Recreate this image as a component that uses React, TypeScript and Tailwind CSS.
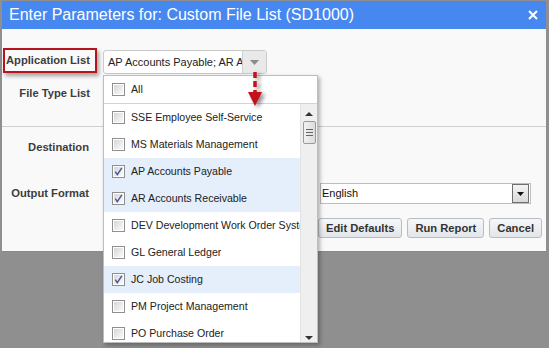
import React from "react";

const FONT = { fontFamily: '"Liberation Sans", Arial, sans-serif' };

interface Item {
  label: string;
  checked?: boolean;
}

const items: Item[] = [
  { label: "SSE Employee Self-Service" },
  { label: "MS Materials Management" },
  { label: "AP Accounts Payable", checked: true },
  { label: "AR Accounts Receivable", checked: true },
  { label: "DEV Development Work Order System" },
  { label: "GL General Ledger" },
  { label: "JC Job Costing", checked: true },
  { label: "PM Project Management" },
  { label: "PO Purchase Order" },
];

function CheckBox({ checked }: { checked?: boolean }) {
  return (
    <svg width="13" height="13" viewBox="0 0 13 13" className="shrink-0">
      <defs>
        <linearGradient id="cbg" x1="0" y1="0" x2="1" y2="1">
          <stop offset="0" stopColor="#d6d6d6" />
          <stop offset="1" stopColor="#fbfbfb" />
        </linearGradient>
      </defs>
      <rect x="0.5" y="0.5" width="12" height="12" fill="#fff" stroke="#8f8f8f" />
      <rect x="2" y="2" width="9" height="9" fill="url(#cbg)" />
      {checked && (
        <path d="M3.3 6.6 L5.3 9.6 L9.8 2.8" fill="none" stroke="#4b5a92" strokeWidth="1.5" />
      )}
    </svg>
  );
}

function Row({ item }: { item: Item }) {
  return (
    <div
      className={`flex items-center h-[27px] shrink-0 pl-[8px] gap-[6px] whitespace-nowrap overflow-hidden ${
        item.checked ? "bg-[#e5eefb]" : ""
      }`}
    >
      <CheckBox checked={item.checked} />
      <span className="text-[10.6px] text-[#222]">{item.label}</span>
    </div>
  );
}

function Scrollbar() {
  return (
    <div className="w-[17px] shrink-0 bg-[#efefef] border-l border-[#e2e2e2] flex flex-col items-center relative">
      <svg width="8" height="5" viewBox="0 0 8 5" className="mt-[7px]">
        <path d="M0 5 L4 1 L8 5 Z" fill="#333" />
      </svg>
      <div className="mt-[5px] w-[13px] h-[23px] rounded-[2px] border border-[#9a9a9a] bg-gradient-to-r from-[#f2f2f2] to-[#dcdcdc] flex flex-col items-center justify-center gap-[2px]">
        <div className="w-[7px] h-px bg-[#666]" />
        <div className="w-[7px] h-px bg-[#666]" />
        <div className="w-[7px] h-px bg-[#666]" />
      </div>
      <svg width="8" height="5" viewBox="0 0 8 5" className="absolute left-[4px] top-[232px]">
        <path d="M0 0 L8 0 L4 4 Z" fill="#333" />
      </svg>
    </div>
  );
}

function Btn({ children }: { children: React.ReactNode }) {
  return (
    <button className="h-[20px] px-[7px] rounded-[3px] border border-[#b9bdc2] bg-gradient-to-b from-[#f6f7f9] to-[#e2e6ea] text-[11.2px] font-bold text-[#333]">
      {children}
    </button>
  );
}

export default function App() {
  return (
    <div
      className="relative w-[549px] h-[348px] overflow-hidden bg-[#8e8f8e] pt-px pl-[2px] pr-[3px]"
      style={FONT}
    >
      <div className="flex flex-col">
        {/* title bar */}
        <div className="h-[28px] bg-[#4687f0] flex items-center justify-between pl-[7px] pr-[8px]">
          <span className="text-[16px] text-white">Enter Parameters for: Custom File List (SD1000)</span>
          <svg width="10" height="10" viewBox="0 0 10 10">
            <path d="M1 1 L9 9 M9 1 L1 9" stroke="#fff" strokeWidth="2" />
          </svg>
        </div>

        {/* body */}
        <div className="h-[223px] bg-[#f9f9f9] border-b border-[#5b8fe0] flex flex-col">
          <div className="mt-[18px] flex items-start h-[27px]">
            <div className="ml-px mt-px w-[94px] h-[25px] border-2 border-[#b3141d] shadow-[2px_3px_4px_rgba(0,0,0,0.35)] flex items-center pl-px">
              <span className="text-[11.2px] font-bold text-[#3d3d3d]">Application List</span>
            </div>
            <div className="ml-[6px] mt-[3px] w-[164px] h-[24px] flex border border-[#c9c9c9] rounded-[3px] bg-white overflow-hidden">
              <div className="flex-1 flex items-center pl-[4px] overflow-hidden whitespace-nowrap">
                <span className="text-[11px] text-[#222]">AP Accounts Payable; AR Accounts Receivable</span>
              </div>
              <div className="w-[24px] bg-[#e9e9e9] border-l border-[#cfcfcf] flex items-center justify-center">
                <svg width="9" height="5" viewBox="0 0 9 5">
                  <path d="M0 0 L9 0 L4.5 5 Z" fill="#8a8a8a" />
                </svg>
              </div>
            </div>
          </div>

          <div className="mt-[9px] h-[20px] flex items-center">
            <span className="w-[88px] text-right text-[11.2px] font-bold text-[#3d3d3d]">File Type List</span>
          </div>

          <div className="mt-[23px] h-px bg-[#cfcfcf]" />

          <div className="mt-[10px] h-[20px] flex items-center">
            <span className="w-[87px] text-right text-[11.2px] font-bold text-[#3d3d3d]">Destination</span>
          </div>

          <div className="mt-[26px] h-[21px] flex items-center">
            <span className="w-[87px] text-right text-[11.2px] font-bold text-[#3d3d3d]">Output Format</span>
            <div className="ml-[231px] w-[211px] h-[21px] bg-white border border-[#bdbdbd] flex items-center">
              <span className="flex-1 pl-[1px] text-[11px] text-[#111]">English</span>
              <div className="w-[17px] h-[19px] mr-px border border-[#6f6f6f] bg-gradient-to-b from-[#f4f4f4] to-[#d9d9d9] flex items-center justify-center">
                <svg width="7" height="4" viewBox="0 0 7 4">
                  <path d="M0 0 L7 0 L3.5 4 Z" fill="#111" />
                </svg>
              </div>
            </div>
          </div>

          <div className="mt-[14px] flex justify-end gap-[5px] pr-[4px]">
            <Btn>Edit Defaults</Btn>
            <Btn>Run Report</Btn>
            <Btn>Cancel</Btn>
          </div>
        </div>
      </div>

      {/* dropdown list */}
      <div className="absolute left-[103px] top-[75px] w-[215px] h-[268px] bg-white border border-[#bdbdbd] shadow-[2px_2px_4px_rgba(0,0,0,0.3)] flex flex-col overflow-hidden">
        <div className="h-[28px] shrink-0 flex items-center pl-[8px] gap-[6px] border-b border-[#d3d3d3]">
          <CheckBox />
          <span className="text-[10.6px] text-[#222]">All</span>
        </div>
        <div className="flex flex-1 min-h-0">
          <div className="flex-1 min-w-0 flex flex-col overflow-hidden">
            {items.map((it) => (
              <Row key={it.label} item={it} />
            ))}
          </div>
          <Scrollbar />
        </div>
      </div>

      {/* red pointer arrow */}
      <svg
        width="20"
        height="40"
        viewBox="0 0 20 40"
        className="absolute left-[246px] top-[70px]"
        style={{ filter: "drop-shadow(3px 2px 2px rgba(0,0,0,0.45))" }}
      >
        <path d="M9 2 V22" stroke="#c4121a" strokeWidth="3.5" strokeDasharray="6 3" />
        <path d="M2 22 L16 22 L9 36 Z" fill="#c4121a" />
      </svg>
    </div>
  );
}
